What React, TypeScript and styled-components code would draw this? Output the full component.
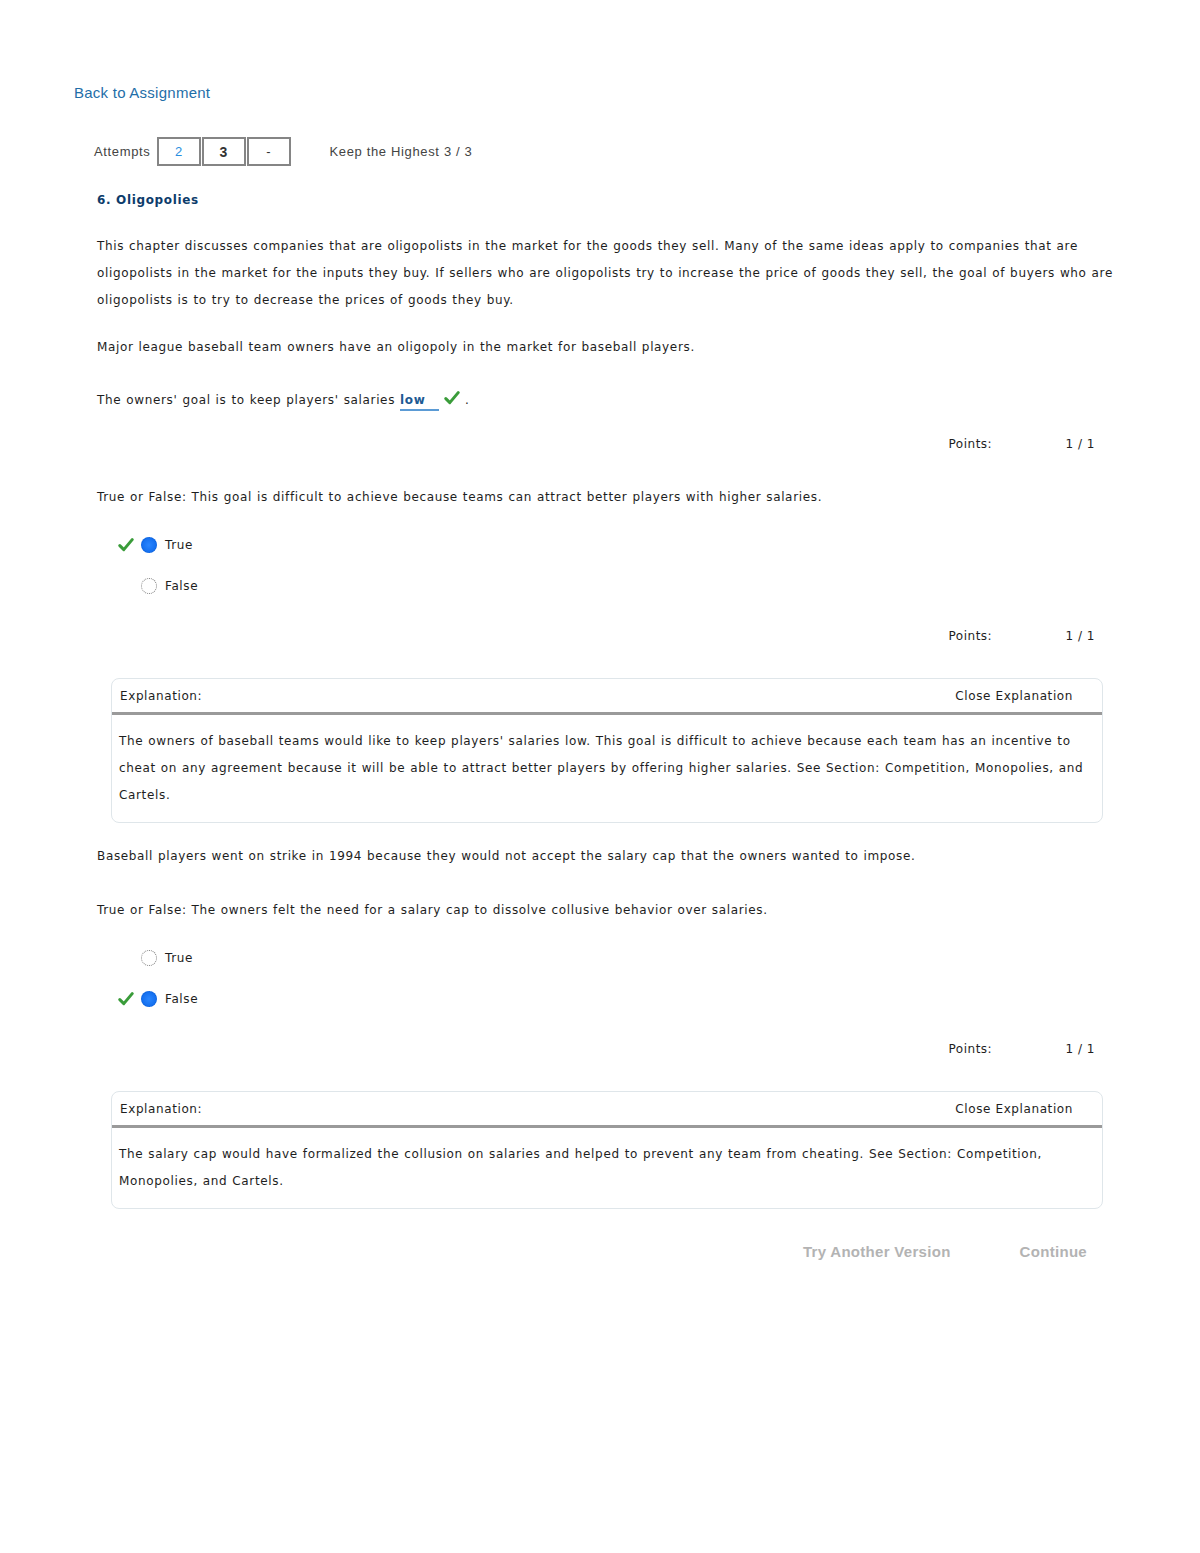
import React from "react";
import styled, { createGlobalStyle } from "styled-components";

const Global = createGlobalStyle`
  html, body { margin: 0; padding: 0; background: #fff; }
  body { font-family: "DejaVu Sans", Verdana, sans-serif; color: #1e1e1e; }
`;

const Page = styled.div`
  width: 1200px;
  min-height: 1553px;
  padding-top: 83px;
  box-sizing: border-box;
`;

const BackLink = styled.a`
  display: block;
  margin-left: 74px;
  font-family: "Liberation Sans", Arial, sans-serif;
  font-size: 15px;
  line-height: 20px;
  letter-spacing: 0.25px;
  color: #1f6ea8;
  text-decoration: none;
`;

const AttemptsRow = styled.div`
  display: flex;
  align-items: center;
  margin: 34px 0 0 94px;
  font-family: "Liberation Sans", Arial, sans-serif;
  font-size: 13px;
  color: #444;
  letter-spacing: 0.65px;
`;

const AttemptsLabel = styled.span`
  margin-right: 6px;
`;

const Boxes = styled.div`
  display: flex;
  gap: 1px;
`;

const AttemptBox = styled.div<{ $variant?: "current" | "bold" | "plain" }>`
  width: 44px;
  height: 29px;
  box-sizing: border-box;
  border: 2px solid #858585;
  display: flex;
  align-items: center;
  justify-content: center;
  letter-spacing: 0;
  font-size: ${(p) => (p.$variant === "bold" ? "14px" : "13px")};
  font-weight: ${(p) => (p.$variant === "bold" ? 700 : 400)};
  color: ${(p) => (p.$variant === "current" ? "#2a8ee0" : "#333")};
`;

const KeepText = styled.span`
  margin-left: 39px;
  color: #444;
`;

const Content = styled.div`
  margin-left: 97px;
  width: 1018px;
`;

const Title = styled.h2`
  margin: 24px 0 0 0;
  font-size: 12px;
  line-height: 20px;
  font-weight: 700;
  letter-spacing: 0.65px;
  color: #0d3c6b;
`;

const Para = styled.p<{ $mt: number }>`
  margin: ${(p) => p.$mt}px 0 0 0;
  font-size: 12px;
  line-height: 27px;
  letter-spacing: 0.65px;
  word-spacing: 0.5px;
`;

const Answer = styled.span`
  display: inline-block;
  font-weight: 700;
  color: #1d5a93;
  border-bottom: 2px solid #5b9bd5;
  line-height: 17px;
  width: 39px;
`;

const PointsRow = styled.div<{ $mt: number }>`
  display: flex;
  justify-content: flex-end;
  margin-top: ${(p) => p.$mt}px;
  padding-right: 20px;
  font-size: 12px;
  line-height: 27px;
  letter-spacing: 0.5px;
`;

const PointsLabel = styled.span`
  width: 117px;
`;

const RadioList = styled.div`
  margin-top: 13px;
`;

const RadioRow = styled.div`
  display: flex;
  align-items: center;
  height: 41px;
  padding-left: 21px;
  font-size: 12px;
  letter-spacing: 0.6px;
`;

const CheckSlot = styled.span`
  width: 23px;
  display: flex;
  align-items: center;
`;

const Radio = styled.span<{ $on?: boolean }>`
  width: 16px;
  height: 16px;
  box-sizing: border-box;
  border-radius: 50%;
  margin-right: 8px;
  border: 1px dotted ${(p) => (p.$on ? "#0a5fd8" : "#7a7a7a")};
  background: ${(p) =>
    p.$on ? "radial-gradient(circle, #2a86ff 0%, #1570ef 70%, #0d62dc 100%)" : "#fff"};
`;

const ExplBox = styled.div<{ $mt: number }>`
  margin: ${(p) => p.$mt}px 12px 0 14px;
  border: 1px solid #dfe6ea;
  border-radius: 8px;
`;

const ExplHeader = styled.div`
  display: flex;
  justify-content: space-between;
  align-items: center;
  height: 33px;
  padding: 0 29px 0 8px;
  border-bottom: 3px solid #9a9a9a;
  font-size: 12px;
  letter-spacing: 0.6px;
`;

const ExplBody = styled.div`
  padding: 13px 8px 13px 7px;
  font-size: 12px;
  line-height: 27px;
  letter-spacing: 0.65px;
  word-spacing: 0.5px;
`;

const Buttons = styled.div`
  display: flex;
  justify-content: flex-end;
  gap: 69px;
  margin-top: 33px;
  padding-right: 28px;
  font-family: "Liberation Sans", Arial, sans-serif;
  font-size: 15px;
  line-height: 20px;
  font-weight: 700;
  letter-spacing: 0.3px;
  color: #b3b3b3;
`;

const Check = ({ size = 16 }: { size?: number }) => (
  <svg width={size} height={size} viewBox="0 0 16 16" style={{ display: "inline-block", verticalAlign: "-2px" }}>
    <path d="M1.8 8.6 L5.8 12.6 L14.2 2.6" fill="none" stroke="#3a9c3a" strokeWidth="3" strokeLinecap="round" strokeLinejoin="round" />
  </svg>
);

const RadioItem = ({ label, selected, correct }: { label: string; selected?: boolean; correct?: boolean }) => (
  <RadioRow>
    <CheckSlot>{correct && <Check />}</CheckSlot>
    <Radio $on={selected} />
    <span>{label}</span>
  </RadioRow>
);

const Points = ({ mt }: { mt: number }) => (
  <PointsRow $mt={mt}>
    <PointsLabel>Points:</PointsLabel>
    <span>1 / 1</span>
  </PointsRow>
);

export default function App() {
  return (
    <>
      <Global />
      <Page>
        <BackLink href="#">Back to Assignment</BackLink>
        <AttemptsRow>
          <AttemptsLabel>Attempts</AttemptsLabel>
          <Boxes>
            <AttemptBox $variant="current">2</AttemptBox>
            <AttemptBox $variant="bold">3</AttemptBox>
            <AttemptBox $variant="plain">-</AttemptBox>
          </Boxes>
          <KeepText>Keep the Highest 3 / 3</KeepText>
        </AttemptsRow>
        <Content>
          <Title>6. Oligopolies</Title>
          <Para $mt={23}>
            This chapter discusses companies that are oligopolists in the market for the goods they sell. Many of the same ideas apply to companies that are oligopolists in the market for the inputs they buy. If sellers who are oligopolists try to increase the price of goods they sell, the goal of buyers who are oligopolists is to try to decrease the prices of goods they buy.
          </Para>
          <Para $mt={20}>Major league baseball team owners have an oligopoly in the market for baseball players.</Para>
          <Para $mt={26}>
            The owners' goal is to keep players' salaries <Answer>low</Answer> <Check /> .
          </Para>
          <Points mt={17} />
          <Para $mt={26}>True or False: This goal is difficult to achieve because teams can attract better players with higher salaries.</Para>
          <RadioList>
            <RadioItem label="True" selected correct />
            <RadioItem label="False" />
          </RadioList>
          <Points mt={17} />
          <ExplBox $mt={28}>
            <ExplHeader>
              <span>Explanation:</span>
              <span>Close Explanation</span>
            </ExplHeader>
            <ExplBody>
              The owners of baseball teams would like to keep players' salaries low. This goal is difficult to achieve because each team has an incentive to cheat on any agreement because it will be able to attract better players by offering higher salaries. See Section: Competition, Monopolies, and Cartels.
            </ExplBody>
          </ExplBox>
          <Para $mt={20}>Baseball players went on strike in 1994 because they would not accept the salary cap that the owners wanted to impose.</Para>
          <Para $mt={27}>True or False: The owners felt the need for a salary cap to dissolve collusive behavior over salaries.</Para>
          <RadioList>
            <RadioItem label="True" />
            <RadioItem label="False" selected correct />
          </RadioList>
          <Points mt={17} />
          <ExplBox $mt={28}>
            <ExplHeader>
              <span>Explanation:</span>
              <span>Close Explanation</span>
            </ExplHeader>
            <ExplBody>
              The salary cap would have formalized the collusion on salaries and helped to prevent any team from cheating. See Section: Competition, Monopolies, and Cartels.
            </ExplBody>
          </ExplBox>
          <Buttons>
            <span>Try Another Version</span>
            <span>Continue</span>
          </Buttons>
        </Content>
      </Page>
    </>
  );
}
